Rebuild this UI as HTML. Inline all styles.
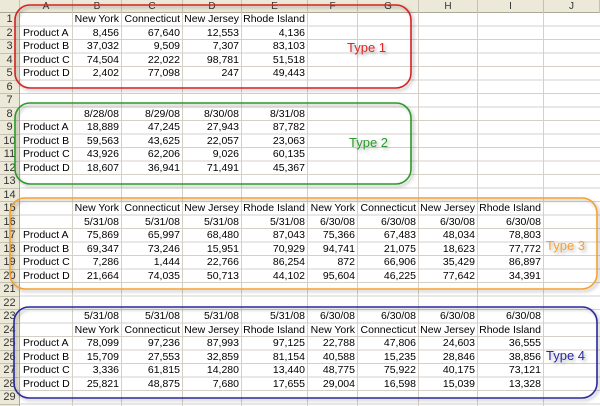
<!DOCTYPE html>
<html><head><style>
body{margin:0;width:600px;height:406px;overflow:hidden;background:#fff;font-family:"Liberation Sans",Arial,sans-serif;font-size:10.5px;color:#000;position:relative}
.grid{position:absolute;left:0;top:13px;width:600px;height:393px;background:repeating-linear-gradient(to bottom,transparent 0,transparent 12.5px,#d4d0c8 12.5px,#d4d0c8 13.5px)}
.v{position:absolute;top:0;height:406px;width:1px;background:#d4d0c8}
.ch{position:absolute;top:0;left:0;width:600px;height:13px;background:#ece9d8;border-bottom:1px solid #aca899;box-sizing:border-box}
.ch span{position:absolute;top:0;height:13px;line-height:13px;text-align:center;font-size:10px;color:#333;border-right:1px solid #c5c2b2;box-sizing:border-box}
.rh{position:absolute;left:0;top:13px;width:20px;height:393px;background:#ece9d8;border-right:1px solid #aca899;box-sizing:border-box}
.rh div{height:13.5px;line-height:13.5px;text-align:center;font-size:11px;color:#333;border-bottom:1px solid #c5c2b2;box-sizing:border-box}
.r{position:absolute;left:20px;height:13.5px;display:flex;line-height:13px}
.r span{box-sizing:border-box;text-align:right;padding-right:3px;white-space:nowrap;overflow:hidden}
.r span:nth-child(1){width:53px;text-align:left;padding-left:3px}
.r span:nth-child(2){width:49px}
.r span:nth-child(3){width:61px}
.r span:nth-child(4){width:59px}
.r span:nth-child(5){width:66px}
.r span:nth-child(6){width:50px}
.r span:nth-child(7){width:61px}
.r span:nth-child(8){width:59px}
.r span:nth-child(9){width:66px}
svg{position:absolute;left:0;top:0}
</style></head><body>
<div class="grid"></div>
<div class="v" style="left:72px"></div><div class="v" style="left:121px"></div><div class="v" style="left:182px"></div><div class="v" style="left:241px"></div><div class="v" style="left:307px"></div><div class="v" style="left:357px"></div><div class="v" style="left:418px"></div><div class="v" style="left:477px"></div><div class="v" style="left:543px"></div>
<div class="ch">
<span style="left:0;width:20px"></span><span style="left:20px;width:53px">A</span><span style="left:73px;width:49px">B</span><span style="left:122px;width:61px">C</span><span style="left:183px;width:59px">D</span><span style="left:242px;width:66px">E</span><span style="left:308px;width:50px">F</span><span style="left:358px;width:61px">G</span><span style="left:419px;width:59px">H</span><span style="left:478px;width:66px">I</span><span style="left:544px;width:56px">J</span>
</div>
<div class="rh"><div>1</div><div>2</div><div>3</div><div>4</div><div>5</div><div>6</div><div>7</div><div>8</div><div>9</div><div>10</div><div>11</div><div>12</div><div>13</div><div>14</div><div>15</div><div>16</div><div>17</div><div>18</div><div>19</div><div>20</div><div>21</div><div>22</div><div>23</div><div>24</div><div>25</div><div>26</div><div>27</div><div>28</div><div>29</div></div>

<div class="r" style="top:13px"><span></span><span>New York</span><span>Connecticut</span><span>New Jersey</span><span>Rhode Island</span></div>
<div class="r" style="top:26.5px"><span>Product A</span><span>8,456</span><span>67,640</span><span>12,553</span><span>4,136</span></div>
<div class="r" style="top:40px"><span>Product B</span><span>37,032</span><span>9,509</span><span>7,307</span><span>83,103</span></div>
<div class="r" style="top:53.5px"><span>Product C</span><span>74,504</span><span>22,022</span><span>98,781</span><span>51,518</span></div>
<div class="r" style="top:67px"><span>Product D</span><span>2,402</span><span>77,098</span><span>247</span><span>49,443</span></div>

<div class="r" style="top:107.5px"><span></span><span>8/28/08</span><span>8/29/08</span><span>8/30/08</span><span>8/31/08</span></div>
<div class="r" style="top:121px"><span>Product A</span><span>18,889</span><span>47,245</span><span>27,943</span><span>87,782</span></div>
<div class="r" style="top:134.5px"><span>Product B</span><span>59,563</span><span>43,625</span><span>22,057</span><span>23,063</span></div>
<div class="r" style="top:148px"><span>Product C</span><span>43,926</span><span>62,206</span><span>9,026</span><span>60,135</span></div>
<div class="r" style="top:161.5px"><span>Product D</span><span>18,607</span><span>36,941</span><span>71,491</span><span>45,367</span></div>

<div class="r" style="top:202px"><span></span><span>New York</span><span>Connecticut</span><span>New Jersey</span><span>Rhode Island</span><span>New York</span><span>Connecticut</span><span>New Jersey</span><span>Rhode Island</span></div>
<div class="r" style="top:215.5px"><span></span><span>5/31/08</span><span>5/31/08</span><span>5/31/08</span><span>5/31/08</span><span>6/30/08</span><span>6/30/08</span><span>6/30/08</span><span>6/30/08</span></div>
<div class="r" style="top:229px"><span>Product A</span><span>75,869</span><span>65,997</span><span>68,480</span><span>87,043</span><span>75,366</span><span>67,483</span><span>48,034</span><span>78,803</span></div>
<div class="r" style="top:242.5px"><span>Product B</span><span>69,347</span><span>73,246</span><span>15,951</span><span>70,929</span><span>94,741</span><span>21,075</span><span>18,623</span><span>77,772</span></div>
<div class="r" style="top:256px"><span>Product C</span><span>7,286</span><span>1,444</span><span>22,766</span><span>86,254</span><span>872</span><span>66,906</span><span>35,429</span><span>86,897</span></div>
<div class="r" style="top:269.5px"><span>Product D</span><span>21,664</span><span>74,035</span><span>50,713</span><span>44,102</span><span>95,604</span><span>46,225</span><span>77,642</span><span>34,391</span></div>

<div class="r" style="top:310px"><span></span><span>5/31/08</span><span>5/31/08</span><span>5/31/08</span><span>5/31/08</span><span>6/30/08</span><span>6/30/08</span><span>6/30/08</span><span>6/30/08</span></div>
<div class="r" style="top:323.5px"><span></span><span>New York</span><span>Connecticut</span><span>New Jersey</span><span>Rhode Island</span><span>New York</span><span>Connecticut</span><span>New Jersey</span><span>Rhode Island</span></div>
<div class="r" style="top:337px"><span>Product A</span><span>78,099</span><span>97,236</span><span>87,993</span><span>97,125</span><span>22,788</span><span>47,806</span><span>24,603</span><span>36,555</span></div>
<div class="r" style="top:350.5px"><span>Product B</span><span>15,709</span><span>27,553</span><span>32,859</span><span>81,154</span><span>40,588</span><span>15,235</span><span>28,846</span><span>38,856</span></div>
<div class="r" style="top:364px"><span>Product C</span><span>3,336</span><span>61,815</span><span>14,280</span><span>13,440</span><span>48,775</span><span>75,922</span><span>40,175</span><span>73,121</span></div>
<div class="r" style="top:377.5px"><span>Product D</span><span>25,821</span><span>48,875</span><span>7,680</span><span>17,655</span><span>29,004</span><span>16,598</span><span>15,039</span><span>13,328</span></div>

<svg width="600" height="406">
<defs><filter id="s" x="-5%" y="-5%" width="110%" height="120%"><feDropShadow dx="2" dy="2" stdDeviation="1.5" flood-color="#000" flood-opacity="0.3"/></filter></defs>
<g fill="none" stroke-width="1.6" filter="url(#s)">
<rect x="15" y="5" width="396" height="83" rx="15" stroke="#d42020"/>
<rect x="15" y="103" width="396" height="81" rx="15" stroke="#2a9a2a"/>
<rect x="10" y="198" width="587" height="91" rx="15" stroke="#f5a030"/>
<rect x="14" y="307" width="583" height="91" rx="15" stroke="#2a2a9a"/>
</g>
<g font-family="Liberation Sans,Arial,sans-serif" font-size="13" filter="url(#s)">
<text x="347" y="52" fill="#e02020">Type 1</text>
<text x="349" y="147" fill="#2a9a2a">Type 2</text>
<text x="546" y="250" fill="#f5a030">Type 3</text>
<text x="546" y="360" fill="#2a2aa0">Type 4</text>
</g>
</svg>
</body></html>
